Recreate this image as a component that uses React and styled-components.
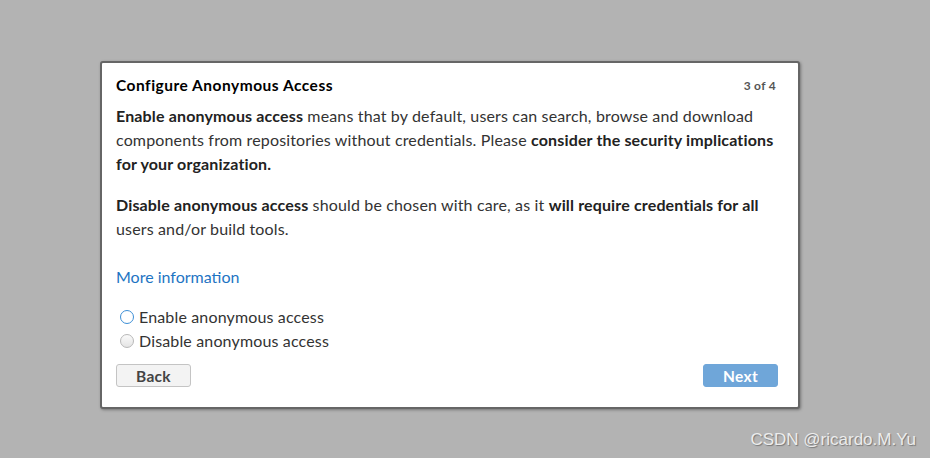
import React from 'react'
import styled, { createGlobalStyle } from 'styled-components'

const GlobalStyle = createGlobalStyle`
    html, body {
        margin: 0;
        padding: 0;
        background: #b3b3b3;
        height: 100%;
    }
    body {
        font-family: Lato, "Open Sans", sans-serif;
    }
`

function App() {
    return (
        <PageStyled>
            <GlobalStyle />
            <Dialog>
                <Header>
                    <h3>Configure Anonymous Access</h3>
                    <span className="step">3 of 4</span>
                </Header>
                <Body>
                    <p>
                        <b>Enable anonymous access</b> means that by default, users can search, browse and download
                        components from repositories without credentials. Please <b>consider the security implications
                        for your organization.</b>
                    </p>
                    <p>
                        <b>Disable anonymous access</b> should be chosen with care, as it <b>will require credentials for all</b> users and/or build tools.
                    </p>
                    <MoreLink href="#">More information</MoreLink>
                    <Options>
                        <Radio focused>
                            <span className="dot"></span>
                            Enable anonymous access
                        </Radio>
                        <Radio>
                            <span className="dot"></span>
                            Disable anonymous access
                        </Radio>
                    </Options>
                </Body>
                <Footer>
                    <Button>Back</Button>
                    <Button primary>Next</Button>
                </Footer>
            </Dialog>
            <Watermark>CSDN @ricardo.M.Yu</Watermark>
        </PageStyled>
    )
}

const PageStyled = styled.div`
    position: relative;
    width: 930px;
    height: 458px;
    padding: 61px 0 0 100px;
    box-sizing: border-box;
`

const Dialog = styled.div`
    width: 700px;
    box-sizing: border-box;
    background: #fff;
    border: 2px solid #666;
    border-radius: 3px;
    box-shadow: 1px 1px 3px rgba(0, 0, 0, 0.35);
    padding: 11px 20px 20px 14px;
`

const Header = styled.div`
    display: flex;
    justify-content: space-between;
    align-items: center;
    height: 22px;
    h3{
        margin: 0;
        font-size: 15.5px;
        letter-spacing: 0.5px;
        font-weight: 700;
        color: #000;
    }
    .step{
        font-size: 12px;
        letter-spacing: 0.3px;
        font-weight: 700;
        color: #555;
        padding-right: 2px;
    }
`

const Body = styled.div`
    padding-top: 8px;
    color: #333;
    font-size: 16px;
    letter-spacing: 0.15px;
    line-height: 24px;
    p{
        margin: 0 0 17px 0;
    }
    b{
        font-weight: 700;
        color: #222;
    }
`

const MoreLink = styled.a`
    display: block;
    margin-top: 24px;
    color: #1d74c3;
    text-decoration: none;
    letter-spacing: 0;
`

const Options = styled.div`
    display: flex;
    flex-direction: column;
    padding-top: 16px;
    padding-left: 4px;
`

const Radio = styled.label`
    display: flex;
    align-items: center;
    height: 24px;
    color: #333;
    .dot{
        width: 14px;
        height: 14px;
        border-radius: 50%;
        margin-right: 5px;
        box-sizing: border-box;
        border: 1px solid ${p => p.focused ? '#3d8fd6' : '#b8b8b8'};
        background: ${p => p.focused ? '#fff' : 'linear-gradient(#fafafa, #e4e4e4)'};
    }
`

const Footer = styled.div`
    display: flex;
    justify-content: space-between;
    padding-top: 11px;
`

const Button = styled.button`
    width: 75px;
    height: 23px;
    border-radius: 3px;
    font-family: Lato, "Open Sans", sans-serif;
    font-size: 15.5px;
    letter-spacing: 0.3px;
    font-weight: 700;
    padding: 0;
    cursor: pointer;
    border: 1px solid ${p => p.primary ? '#6fa6d9' : '#c4c4c4'};
    background: ${p => p.primary ? '#6fa6d9' : '#f3f3f3'};
    color: ${p => p.primary ? '#fff' : '#444'};
`

const Watermark = styled.div`
    position: absolute;
    right: 14px;
    bottom: 8px;
    font-family: "Liberation Sans", Arial, sans-serif;
    font-size: 17px;
    color: #ececec;
    text-shadow: 1px 1px 1px #777;
`

export default App
